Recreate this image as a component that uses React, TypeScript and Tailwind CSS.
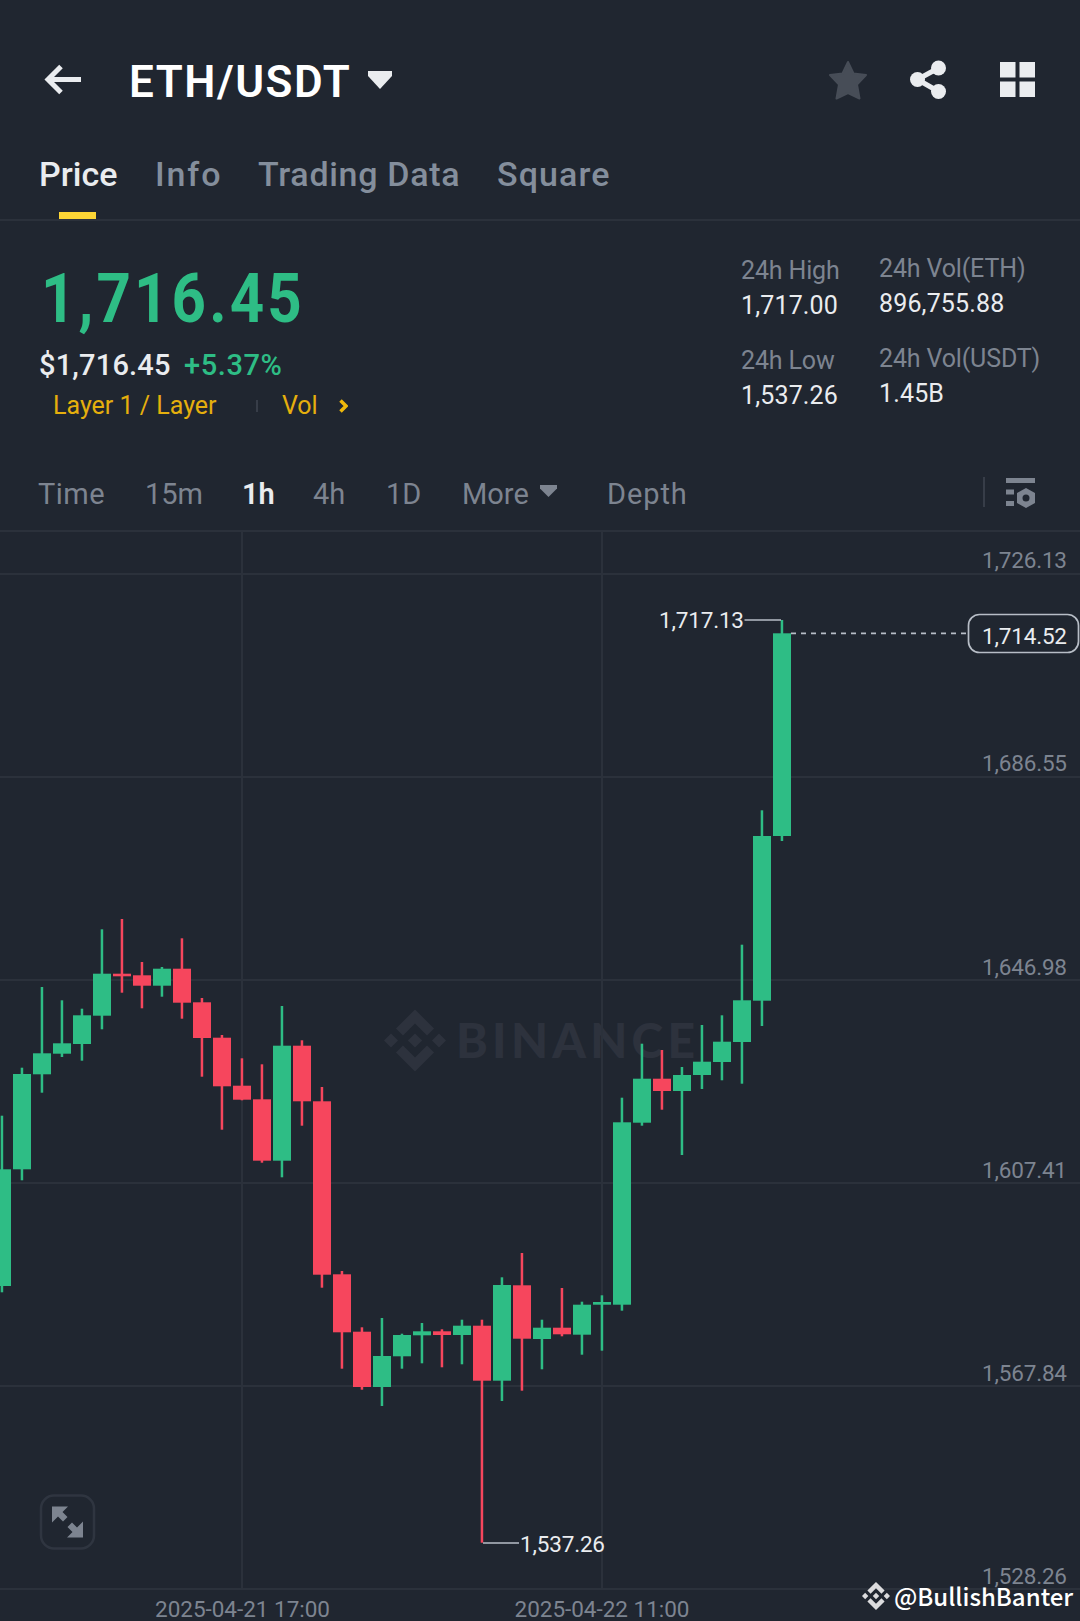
type Candle = [top: number, high: number, low: number, bottom: number, up: 0 | 1];

// body top, wick top, wick bottom, body bottom (chart pixels), up/down
const CANDLES: Candle[] = [
  [1169.3, 1115.7, 1292.3, 1286, 1],
  [1074, 1067.7, 1180.3, 1169.3, 1],
  [1053.3, 987, 1092.7, 1074.3, 1],
  [1043.3, 1000.3, 1057, 1053.7, 1],
  [1015.3, 1008.7, 1060.7, 1044, 1],
  [973.7, 929.3, 1029.3, 1015.7, 1],
  [973.7, 919, 992.7, 976.3, 0],
  [975.3, 962, 1008.3, 985.7, 0],
  [968.7, 967, 996.7, 985.7, 1],
  [968.7, 938.3, 1018.7, 1002.7, 0],
  [1002.3, 998, 1076.7, 1038, 0],
  [1037.7, 1035, 1129.7, 1086.3, 0],
  [1085.7, 1058.3, 1100.3, 1099.7, 0],
  [1099.3, 1064.3, 1162.7, 1160.7, 0],
  [1045.7, 1006, 1177.3, 1160.7, 1],
  [1045.7, 1040.3, 1125.7, 1101.3, 0],
  [1101.3, 1087, 1287.7, 1274.7, 0],
  [1274.3, 1271, 1368.7, 1332.3, 0],
  [1331.7, 1327.3, 1389.7, 1387, 0],
  [1356, 1318, 1406, 1387, 1],
  [1335, 1333.7, 1368.7, 1356.3, 1],
  [1331.3, 1323, 1363.3, 1335.3, 1],
  [1331.3, 1329.3, 1367.3, 1335, 0],
  [1325.7, 1319.7, 1364.3, 1335, 1],
  [1325.7, 1319.7, 1542.7, 1380.7, 0],
  [1285, 1277.3, 1401, 1380.7, 1],
  [1285.3, 1253, 1390.7, 1338.7, 0],
  [1327.7, 1319.7, 1369.3, 1339, 1],
  [1327.7, 1288, 1336.3, 1334.3, 0],
  [1304.7, 1301.7, 1354.7, 1334.7, 1],
  [1302, 1295.3, 1350.7, 1304.7, 1],
  [1122.3, 1097.7, 1310.7, 1304.7, 1],
  [1078.7, 1043.7, 1125.7, 1122.7, 1],
  [1078.7, 1050, 1109.7, 1091, 0],
  [1075, 1067, 1155, 1091, 1],
  [1061.7, 1025, 1089, 1075, 1],
  [1041.7, 1015.3, 1080.3, 1062, 1],
  [1000.3, 944.7, 1083.7, 1042, 1],
  [836, 810.3, 1026, 1000.7, 1],
  [633.3, 620, 841, 836, 1],
];

const LEVELS = [
  { y: 574, label: "1,726.13" },
  { y: 777, label: "1,686.55" },
  { y: 980, label: "1,646.98" },
  { y: 1183, label: "1,607.41" },
  { y: 1386, label: "1,567.84" },
  { y: 1589, label: "1,528.26" },
];

const TABS = [
  { label: "Price", cls: "w-[79px] text-[#eaecef]" },
  { label: "Info", cls: "ml-[37px] w-[66px] tracking-[1.9px] text-[#848e9c]" },
  { label: "Trading Data", cls: "ml-[37px] w-[202px] tracking-[0.7px] text-[#848e9c]" },
  { label: "Square", cls: "ml-[37px] w-[114px] tracking-[1.1px] text-[#848e9c]" },
];

const LOGO_PATH =
  "M38.73 53.2 63.3 28.63 87.9 53.22l14.3-14.3L63.3 0 24.43 38.9zM0 63.31 14.3 49l14.3 14.3-14.3 14.3zM38.73 73.41 63.3 98l24.6-24.6 14.3 14.29-38.9 38.92-38.9-38.9zM98 63.31 112.3 49l14.31 14.3-14.3 14.31zM77.83 63.3 63.3 48.78 48.78 63.3 63.3 77.83z";

function Header() {
  return (
    <header className="flex h-40 items-center pl-[44px] pr-[45px]">
      <svg className="h-8 w-[38px] shrink-0" viewBox="0 0 38 32" fill="none" stroke="#eaecef" strokeWidth="5">
        <path d="M17 2.5 4 15.5l13 13M4 15.5h33" />
      </svg>
      <h1 className="ml-[47px] w-[222px] whitespace-nowrap pt-1 text-[44px] font-semibold leading-none tracking-[1.5px] text-white">ETH/USDT</h1>
      <svg className="ml-[17px] h-[18px] w-[24px]" viewBox="0 0 24 18" fill="#eaecef">
        <path d="M0 0h24v5L12 18 0 5z" />
      </svg>
      <div className="ml-auto flex items-center">
        <svg className="h-[40px] w-[38px]" viewBox="0 0 38 40" fill="#474d57" stroke="#474d57" strokeWidth="2" strokeLinejoin="round">
          <path d="M19 2 24.5 13.5 37 15l-9 9.5L30.5 38.5 19 33 7.5 38.5 10 24.5 1 15l12.5-1.5z" />
        </svg>
        <svg className="ml-[43px] h-[40px] w-[38px]" viewBox="0 0 38 40" fill="#eaecef" stroke="#eaecef">
          <path d="M7.500 19.500 28.500 8M7.500 19.500 28.500 31.500" strokeWidth="5" />
          <circle cx="7.500" cy="19.500" r="7.500" stroke="none" />
          <circle cx="28.500" cy="8" r="7.500" stroke="none" />
          <circle cx="28.500" cy="31.500" r="7.500" stroke="none" />
        </svg>
        <svg className="mb-0.5 ml-[52px] h-[35px] w-[35px]" viewBox="0 0 35 35" fill="#eaecef">
          <path d="M0 0h15.500v15.500H0zM19.500 0H35v15.500H19.500zM0 19.500h15.500V35H0zM19.500 19.500H35V35H19.500z" />
        </svg>
      </div>
    </header>
  );
}

function Tabs() {
  return (
    <nav className="flex h-[61px] border-b-2 border-[#2b313b] pl-[39px]">
      {TABS.map((t, i) => (
        <div key={t.label} className={`relative whitespace-nowrap text-[34px] font-medium leading-[28px] ${t.cls}`}>
          {t.label}
          {i === 0 && <span className="absolute left-5 top-[52px] h-[7px] w-[37px] bg-[#fcd535]" />}
        </div>
      ))}
    </nav>
  );
}

function Stat({ label, value }: { label: string; value: string }) {
  return (
    <div className="h-[90px] whitespace-nowrap">
      <div className="text-[25px] leading-[35px] tracking-[-0.15px] text-[#7d8490]">{label}</div>
      <div className="text-[25px] leading-[35px] tracking-[0.15px] text-[#eaecef]">{value}</div>
    </div>
  );
}

function Summary() {
  return (
    <section className="flex h-[231px] items-start">
      <div className="w-[741px] whitespace-nowrap pl-[39px] pt-[43px]">
        <div className="ml-0.5 origin-left scale-x-[0.87] text-[69px] font-bold leading-[70px] tracking-[3.600px] text-[#2ebd85]">1,716.45</div>
        <div className="mt-[14px] flex text-[29px] font-medium leading-[34px] tracking-[0.2px]">
          <span className="w-[145px] text-[#eaecef]">$1,716.45</span>
          <span className="tracking-[0.6px] text-[#2ebd85]">+5.37%</span>
        </div>
        <div className="mt-[7px] flex items-center pl-[14px] text-[25px] leading-[34px] text-[#e5af0d]">
          <span className="w-[203px]">Layer 1 / Layer</span>
          <span className="h-3 w-[2px] bg-[#373d48]" />
          <span className="ml-[24px] w-[57px]">Vol</span>
          <svg className="h-[14px] w-[9px]" viewBox="0 0 9 14" fill="none" stroke="#f0b90b" strokeWidth="3.500">
            <path d="m1.500 1.500 5.500 5.500-5.500 5.500" />
          </svg>
        </div>
      </div>
      <div className="w-[138px] pt-[32px]">
        <Stat label="24h High" value="1,717.00" />
        <Stat label="24h Low" value="1,537.26" />
      </div>
      <div className="pt-[30px]">
        <Stat label="24h Vol(ETH)" value="896,755.88" />
        <Stat label="24h Vol(USDT)" value="1.45B" />
      </div>
    </section>
  );
}

function Intervals() {
  return (
    <div className="flex h-20 items-center whitespace-nowrap border-b-2 border-[#2b313b] pl-[38px] pr-[44px] pt-1 text-[29px] text-[#7d8490]">
      <span className="w-[107px] pt-1 tracking-[0.5px]">Time</span>
      <span className="w-[97px] pt-1">15m</span>
      <span className="w-[71px] pt-1 font-semibold text-[#eaecef]">1h</span>
      <span className="w-[73px] pt-1">4h</span>
      <span className="w-[76px] pt-1">1D</span>
      <span className="w-[78px] pt-1">More</span>
      <svg className="mb-1 h-3 w-[17px]" viewBox="0 0 17 12" fill="#7d8490">
        <path d="M0 0h17v3.500L8.500 12 0 3.500z" />
      </svg>
      <span className="ml-[50px] pt-1 tracking-[0.9px]">Depth</span>
      <span className="mb-0.5 ml-auto h-[30px] w-[2px] bg-[#373d48]" />
      <svg className="mb-px ml-[21px] h-[30px] w-[30px]" viewBox="0 0 30 30" fill="#7d8490">
        <path d="M0 0h29v5H0zM0 11.500h8v5H0zM0 23h8v5H0z" />
        <path fillRule="evenodd" d="m20 10 9 5v10l-9 5-9-5V15zm0 6.500a3.500 3.500 0 1 0 0 7 3.500 3.500 0 0 0 0-7z" />
      </svg>
    </div>
  );
}

function Chart() {
  return (
    <svg className="block h-[1089px] w-[1080px]" viewBox="0 532 1080 1089">
      <svg x="384" y="1009" width="62" height="63" viewBox="0 0 126.61 126.61" fill="#2d323d">
        <path d={LOGO_PATH} />
      </svg>
      <text x="456" y="1057.500" textLength="239" fill="#2d323d" className="font-['Lato'] text-[48px] font-black">BINANCE</text>

      <g stroke="#2b313b" strokeWidth="2">
        {LEVELS.map((l) => (
          <line key={l.y} x1="0" x2="1080" y1={l.y} y2={l.y} />
        ))}
        <line x1="242" x2="242" y1="532" y2="1589" />
        <line x1="602" x2="602" y1="532" y2="1589" />
      </g>

      {CANDLES.map(([top, high, low, bottom, up], i) => (
        <g key={i} fill={up ? "#2ebd85" : "#f6465d"}>
          <rect x={0.7 + i * 20} y={high} width="2.500" height={low - high} />
          <rect x={i * 20 - 7} y={top} width="18" height={bottom - top} />
        </g>
      ))}

      <g stroke="#b7bdc6" strokeWidth="1.700" fill="none">
        <path d="M744.500 620H781M483 1543h36" />
        <path d="M791 633.300h176" strokeDasharray="5 5" />
        <rect x="968.500" y="614.500" width="110" height="38" rx="11" />
      </g>

      <g className="text-[22.5px]" fill="#7d8490">
        {LEVELS.map((l) => (
          <text key={l.y} x="982" y={l.y > 900 ? l.y - 5 : l.y - 6} textLength="85">{l.label}</text>
        ))}
        <text x="155" y="1617" textLength="175">2025-04-21 17:00</text>
        <text x="514.500" y="1617" textLength="175">2025-04-22 11:00</text>
      </g>
      <g className="text-[22.5px]" fill="#eaecef">
        <text x="982" y="644" textLength="85">1,714.52</text>
        <text x="659" y="628" textLength="85">1,717.13</text>
        <text x="520" y="1552" textLength="85">1,537.26</text>
      </g>

      {/* fullscreen button */}
      <rect x="41" y="1495.500" width="53" height="53" rx="13" fill="none" stroke="#2f3540" strokeWidth="2.500" />
      <path
        d="M52 1506.500h16l-5.500 5.500 5 5-4.500 4.500-5-5-6 6zM83 1537.500H67l5.500-5.500-5-5 4.500-4.500 5 5 6-6z"
        fill="#7d8490"
      />
    </svg>
  );
}

export default function App() {
  return (
    <div className="relative h-[1621px] w-[1080px] overflow-hidden bg-[#202630] font-['Roboto',sans-serif]">
      <Header />
      <Tabs />
      <Summary />
      <Intervals />
      <Chart />
      <div className="absolute bottom-[10px] left-[862px] flex items-center whitespace-nowrap font-['Noto_Sans_CJK_SC',sans-serif] text-[24px] font-medium leading-[30px] text-white">
        <svg viewBox="0 0 126.61 126.61" className="mr-1 h-7 w-7 text-[#dcdcde]" fill="currentColor">
          <path d={LOGO_PATH} />
        </svg>
        @BullishBanter
      </div>
    </div>
  );
}
